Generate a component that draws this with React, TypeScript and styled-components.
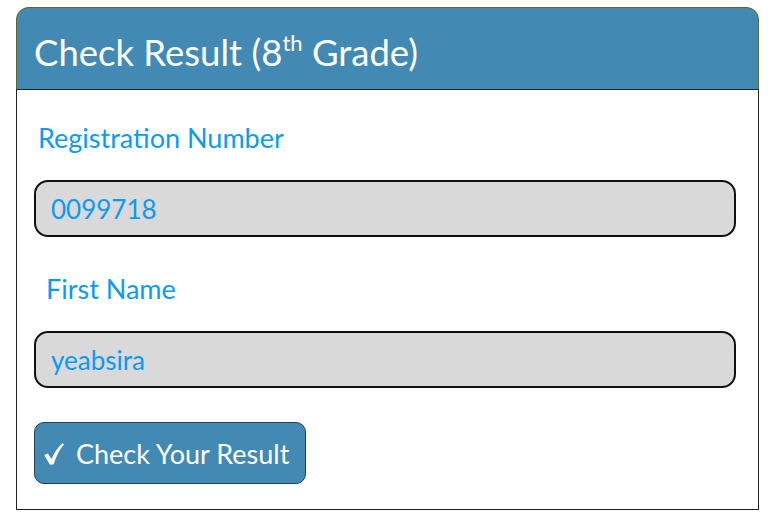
import React from 'react'
import styled, { createGlobalStyle } from 'styled-components'

const GlobalStyle = createGlobalStyle`
    body {
        margin: 0;
        background: #fff;
        font-family: Lato, "Open Sans", sans-serif;
    }
`

const TickIcon = () => (
    <Tick viewBox="0 0 20 22" aria-hidden="true">
        <path d="M0.3 12 L4 10.4 L7.4 16 Q11.5 6.5 18.6 0.3 L20 1.6 Q13.5 9 9.6 21.6 L5.8 21.6 Z" fill="#fff" />
    </Tick>
)

const App = () => {
    return (
        <Page>
            <GlobalStyle />
            <Card>
                <Header>
                    <Title>Check Result (8<sup>th</sup> Grade)</Title>
                </Header>
                <Body>
                    <Label>Registration Number</Label>
                    <Field value="0099718" readOnly />
                    <Label indent>First Name</Label>
                    <Field value="yeabsira" readOnly />
                    <Button type="button">
                        <TickIcon />
                        Check Your Result
                    </Button>
                </Body>
            </Card>
        </Page>
    )
}

export default App

const Page = styled.div`
    padding: 7px 9px 0 16px;
`

const Card = styled.div`
    width: 743px;
`

const Header = styled.div`
    height: 82px;
    box-sizing: border-box;
    background: #428ab4;
    border: 1px solid #5a6a2e;
    border-bottom: none;
    border-radius: 13px 13px 0 0;
    display: flex;
    align-items: center;
    padding: 7px 0 0 17px;
`

const Title = styled.h1`
    margin: 0;
    color: #fff;
    font-weight: 400;
    font-size: 36.5px;
    sup {
        font-size: 22px;
        line-height: 0;
        vertical-align: 15px;
    }
`

const Body = styled.div`
    border: 1.5px solid #222;
    height: 421px;
    box-sizing: border-box;
    padding: 30px 22px 0 17px;
    display: flex;
    flex-direction: column;
    align-items: flex-start;
`

const Label = styled.label<{ indent?: boolean }>`
    color: #0a9bf5;
    font-size: 27px;
    margin-left: ${p => (p.indent ? 12 : 4)}px;
    line-height: 36px;
    margin-bottom: 24px;
`

const Field = styled.input`
    width: 100%;
    height: 57px;
    box-sizing: border-box;
    border: 2px solid #111;
    border-radius: 14px;
    background: #d9d9d9;
    color: #0a9bf5;
    font-family: inherit;
    font-size: 26px;
    padding: 0 15px;
    margin-bottom: 34px;
    outline: none;
`

const Button = styled.button`
    height: 62px;
    width: 272px;
    background: #428ab4;
    border: 1.5px solid #1f4258;
    border-radius: 10px;
    color: #fff;
    font-family: inherit;
    font-size: 27px;
    padding: 0 0 0 9px;
    text-align: left;
    display: flex;
    align-items: center;
    gap: 12px;
`

const Tick = styled.svg`
    width: 20px;
    height: 22px;
    flex-shrink: 0;
    margin-top: 2px;
`
